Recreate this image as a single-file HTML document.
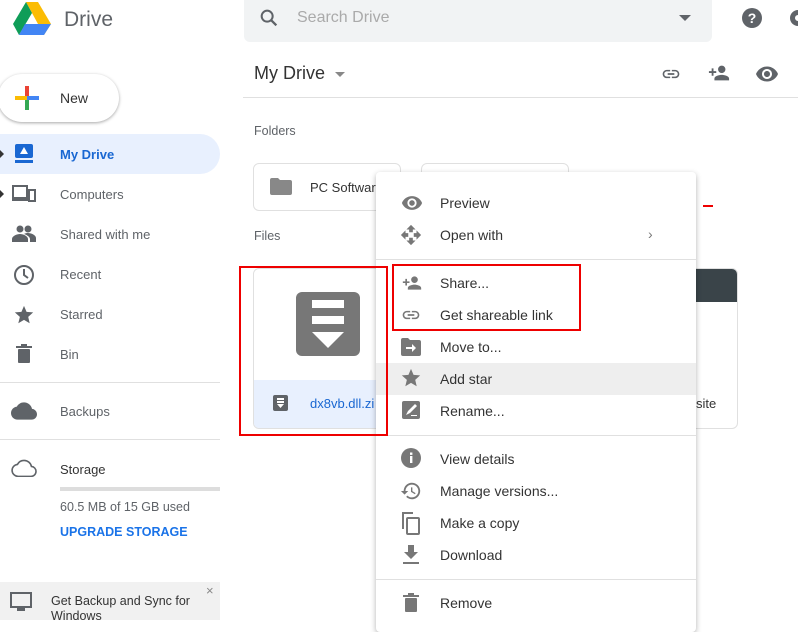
<!DOCTYPE html>
<html><head><meta charset="utf-8"><style>
*{box-sizing:border-box;margin:0;padding:0}
body{width:798px;height:620px;overflow:hidden;background:#fff;font-family:"Liberation Sans",Arial,sans-serif;position:relative;color:#333}
.a{position:absolute}
.nav{position:absolute;left:60px;font-size:13px;color:#5f6368}
.ic{position:absolute}
.mi{position:absolute;left:440px;font-size:14px;color:#333}
svg{position:absolute}
</style></head><body>
<!-- logo -->
<svg style="left:13px;top:2px" width="38" height="33" viewBox="0 0 38 33">
<polygon points="13,0 25,0 38,22 31,33" fill="#fbbc04"/>
<polygon points="13,0 0,22 6,33 19,11" fill="#0f9d58"/>
<polygon points="6,33 31,33 38,22 12,22" fill="#4285f4"/>
</svg>
<div class="a" style="left:64px;top:8px;font-size:21px;color:#5f6368">Drive</div>
<!-- search -->
<div class="a" style="left:244px;top:0;width:468px;height:42px;background:#f1f3f4;border-radius:0 0 6px 6px"></div>
<svg style="left:258px;top:7px" width="22" height="22" viewBox="0 0 24 24"><circle cx="10" cy="10" r="6" fill="none" stroke="#5f6368" stroke-width="2.2"/><path d="M14.5 14.5L20 20" stroke="#5f6368" stroke-width="2.5"/></svg>
<div class="a" style="left:297px;top:9px;font-size:16px;color:#aaa">Search Drive</div>
<svg style="left:679px;top:15px" width="12" height="6"><polygon points="0,0 12,0 6,6" fill="#5f6368"/></svg>
<svg style="left:741px;top:7px" width="22" height="22" viewBox="0 0 22 22"><circle cx="11" cy="11" r="10" fill="#5f6368"/><text x="11" y="16" font-size="14" font-weight="bold" fill="#fff" text-anchor="middle" font-family="Liberation Sans">?</text></svg>
<svg style="left:788px;top:8px" width="12" height="20"><circle cx="10" cy="10" r="8" fill="#5f6368"/><circle cx="10" cy="10" r="3" fill="#fff"/></svg>
<!-- header 2 -->
<div class="a" style="left:254px;top:63px;font-size:18px;color:#333">My Drive</div>
<svg style="left:335px;top:72px" width="10" height="5"><polygon points="0,0 10,0 5,5" fill="#888"/></svg>
<svg style="left:660px;top:64px" width="22" height="20" viewBox="0 0 24 24"><path d="M3.9 12c0-1.7 1.4-3.1 3.1-3.1h4V7H7c-2.8 0-5 2.2-5 5s2.2 5 5 5h4v-1.9H7c-1.7 0-3.1-1.4-3.1-3.1zM8 13h8v-2H8v2zm9-6h-4v1.9h4c1.7 0 3.1 1.4 3.1 3.1s-1.4 3.1-3.1 3.1h-4V17h4c2.8 0 5-2.2 5-5s-2.2-5-5-5z" fill="#5f6368"/></svg>
<svg style="left:706px;top:62px" width="26" height="22" viewBox="0 0 24 24"><path d="M15 12c2.2 0 4-1.8 4-4s-1.8-4-4-4-4 1.8-4 4 1.8 4 4 4zm-9-2V7H4v3H1v2h3v3h2v-3h3v-2H6zm9 4c-2.7 0-8 1.3-8 4v2h16v-2c0-2.7-5.3-4-8-4z" fill="#5f6368"/></svg>
<svg style="left:755px;top:62px" width="24" height="24" viewBox="0 0 24 24"><path d="M12 4.5C7 4.5 2.7 7.6 1 12c1.7 4.4 6 7.5 11 7.5s9.3-3.1 11-7.5c-1.7-4.4-6-7.5-11-7.5zM12 17c-2.8 0-5-2.2-5-5s2.2-5 5-5 5 2.2 5 5-2.2 5-5 5zm0-8c-1.7 0-3 1.3-3 3s1.3 3 3 3 3-1.3 3-3-1.3-3-3-3z" fill="#5f6368"/></svg>
<div class="a" style="left:243px;top:97px;width:555px;height:1px;background:#e0e0e0"></div>
<!-- New button -->
<div class="a" style="left:-2px;top:74px;width:121px;height:48px;border-radius:24px;background:#fff;box-shadow:0 1px 3px rgba(0,0,0,.35)"></div>
<div class="a" style="left:25px;top:86px;width:4px;height:24px;background:#ea4335"></div>
<div class="a" style="left:25px;top:98px;width:4px;height:12px;background:#34a853"></div>
<div class="a" style="left:15px;top:96px;width:12px;height:4px;background:#fbbc04"></div>
<div class="a" style="left:27px;top:96px;width:12px;height:4px;background:#4285f4"></div>
<div class="a" style="left:60px;top:90px;font-size:14px;color:#333">New</div>
<!-- nav -->
<div class="a" style="left:0;top:134px;width:220px;height:40px;background:#e8f0fe;border-radius:0 20px 20px 0"></div>
<svg style="left:0;top:150px" width="4" height="8"><polygon points="0,0 4,4 0,8" fill="#333"/></svg>
<svg style="left:0;top:190px" width="4" height="8"><polygon points="0,0 4,4 0,8" fill="#333"/></svg>
<svg style="left:14px;top:144px" width="20" height="20"><rect x="1" y="0" width="18" height="14" rx="2" fill="#1967d2"/><rect x="1" y="16" width="18" height="3" fill="#1967d2"/><polygon points="10,3 14,10 6,10" fill="#fff"/></svg>
<div class="nav" style="top:147px;color:#1967d2;font-weight:bold">My Drive</div>
<svg style="left:12px;top:185px" width="24" height="18"><rect x="1" y="1" width="14" height="12" fill="none" stroke="#5f6368" stroke-width="2"/><rect x="0" y="14" width="16" height="2" fill="#5f6368"/><rect x="17" y="5" width="6" height="11" fill="none" stroke="#5f6368" stroke-width="2"/></svg>
<div class="nav" style="top:187px">Computers</div>
<svg style="left:12px;top:225px" width="24" height="18" viewBox="0 0 24 18"><circle cx="8" cy="4" r="3.5" fill="#5f6368"/><circle cx="16" cy="4" r="3.5" fill="#5f6368"/><path d="M0 17v-3c0-3 5-5 8-5s8 2 8 5v3zM12 9c2-1 3-1 4-1 3 0 8 2 8 5v4h-6v-3c0-2-3-4-6-5z" fill="#5f6368"/></svg>
<div class="nav" style="top:227px">Shared with me</div>
<svg style="left:13px;top:264px" width="22" height="22"><circle cx="11" cy="11" r="9" fill="none" stroke="#5f6368" stroke-width="2"/><path d="M11 5v6l4 3" stroke="#5f6368" stroke-width="2" fill="none"/></svg>
<div class="nav" style="top:267px">Recent</div>
<svg style="left:13px;top:304px" width="22" height="22" viewBox="0 0 24 24"><path d="M12 17.3l6.2 3.7-1.6-7L22 9.2l-7.2-.6L12 2 9.2 8.6 2 9.2 7.5 14l-1.7 7z" fill="#5f6368"/></svg>
<div class="nav" style="top:307px">Starred</div>
<svg style="left:16px;top:344px" width="16" height="20"><rect x="0" y="2" width="16" height="2" fill="#5f6368"/><rect x="5" y="0" width="6" height="3" fill="#5f6368"/><rect x="2" y="5" width="12" height="14" rx="1" fill="#5f6368"/></svg>
<div class="nav" style="top:347px">Bin</div>
<div class="a" style="left:0;top:382px;width:220px;height:1px;background:#e0e0e0"></div>
<svg style="left:11px;top:402px" width="26" height="18" viewBox="0 0 24 16"><path d="M19.4 6C18.7 2.6 15.7 0 12 0 9.1 0 6.6 1.6 5.4 4 2.3 4.4 0 6.9 0 10c0 3.3 2.7 6 6 6h13c2.8 0 5-2.2 5-5 0-2.6-2-4.8-4.6-5z" fill="#5f6368"/></svg>
<div class="nav" style="top:404px">Backups</div>
<div class="a" style="left:0;top:439px;width:220px;height:1px;background:#e0e0e0"></div>
<svg style="left:11px;top:459px" width="26" height="18" viewBox="0 0 24 16"><path d="M19.4 6C18.7 2.6 15.7 0 12 0 9.1 0 6.6 1.6 5.4 4 2.3 4.4 0 6.9 0 10c0 3.3 2.7 6 6 6h13c2.8 0 5-2.2 5-5 0-2.6-2-4.8-4.6-5z" fill="none" stroke="#5f6368" stroke-width="1.6" transform="translate(1,1) scale(.92)"/></svg>
<div class="nav" style="top:462px;color:#333">Storage</div>
<div class="a" style="left:60px;top:487px;width:160px;height:4px;background:#ddd"></div>
<div class="nav" style="top:500px;font-size:12.5px">60.5 MB of 15 GB used</div>
<div class="nav" style="top:525px;font-size:12.5px;color:#1a73e8;font-weight:bold">UPGRADE STORAGE</div>
<div class="a" style="left:0;top:582px;width:220px;height:38px;background:#f1f1f1"></div>
<svg style="left:10px;top:592px" width="24" height="20"><rect x="1" y="1" width="20" height="14" fill="none" stroke="#5f6368" stroke-width="2"/><rect x="7" y="16" width="8" height="3" fill="#5f6368"/></svg>
<div class="a" style="left:51px;top:594px;font-size:12.5px;color:#333;line-height:15px">Get Backup and Sync for<br>Windows</div>
<div class="a" style="left:206px;top:583px;font-size:13px;color:#888">×</div>
<!-- content -->
<div class="a" style="left:254px;top:124px;font-size:12.5px;color:#5f6368">Folders</div>
<div class="a" style="left:253px;top:163px;width:148px;height:48px;border:1px solid #e0e0e0;border-radius:6px"></div>
<div class="a" style="left:421px;top:163px;width:148px;height:48px;border:1px solid #e0e0e0;border-radius:6px"></div>
<svg style="left:270px;top:178px" width="22" height="17"><path d="M0 2a2 2 0 012-2h6l2 2h10a2 2 0 012 2v11a2 2 0 01-2 2H2a2 2 0 01-2-2z" fill="#888"/></svg>
<div class="a" style="left:310px;top:180px;font-size:13px;color:#333">PC Softwar</div>
<div class="a" style="left:254px;top:229px;font-size:12.5px;color:#5f6368">Files</div>
<div class="a" style="left:253px;top:268px;width:140px;height:161px;border:1px solid #e0e0e0;border-radius:6px;overflow:hidden"><div style="position:absolute;left:0;top:111px;width:140px;height:50px;background:#e8f0fe"></div></div>
<svg style="left:296px;top:292px" width="64" height="64"><rect width="64" height="64" rx="6" fill="#777"/><rect x="16" y="8" width="32" height="8" fill="#fff"/><rect x="16" y="24" width="32" height="8" fill="#fff"/><polygon points="16,40 48,40 32,56" fill="#fff"/></svg>
<svg style="left:272px;top:394px" width="18" height="18"><rect x="1" y="1" width="15" height="16" rx="2" fill="#5f6368"/><rect x="5" y="4" width="7" height="2" fill="#fff"/><rect x="5" y="7" width="7" height="2" fill="#fff"/><polygon points="5,10 12,10 8.5,14" fill="#fff"/></svg>
<div class="a" style="left:310px;top:396px;font-size:13px;color:#1967d2">dx8vb.dll.zi</div>
<div class="a" style="left:680px;top:268px;width:58px;height:161px;border:1px solid #e0e0e0;border-radius:6px;overflow:hidden"><div style="position:absolute;left:0;top:0;width:58px;height:33px;background:#3a4449"></div></div>
<div class="a" style="left:696px;top:396px;font-size:13px;color:#333">site</div>
<div class="a" style="left:703px;top:205px;width:10px;height:2px;background:#e00"></div>
<!-- menu -->
<div class="a" style="left:376px;top:172px;width:320px;height:460px;background:#fff;box-shadow:0 2px 6px rgba(0,0,0,.3);border-radius:4px"></div>
<div class="a" style="left:376px;top:363px;width:320px;height:32px;background:#eee"></div>
<div class="a" style="left:376px;top:259px;width:320px;height:1px;background:#e0e0e0"></div>
<div class="a" style="left:376px;top:435px;width:320px;height:1px;background:#e0e0e0"></div>
<div class="a" style="left:376px;top:579px;width:320px;height:1px;background:#e0e0e0"></div>
<svg style="left:400px;top:192px" width="24" height="22" viewBox="0 0 24 24"><path d="M12 4.5C7 4.5 2.7 7.6 1 12c1.7 4.4 6 7.5 11 7.5s9.3-3.1 11-7.5c-1.7-4.4-6-7.5-11-7.5zM12 17c-2.8 0-5-2.2-5-5s2.2-5 5-5 5 2.2 5 5-2.2 5-5 5zm0-8c-1.7 0-3 1.3-3 3s1.3 3 3 3 3-1.3 3-3-1.3-3-3-3z" fill="#777"/></svg>
<div class="mi" style="top:195px">Preview</div>
<svg style="left:400px;top:224px" width="22" height="22" viewBox="0 0 24 24"><path d="M10 9h4V6h3l-5-5-5 5h3v3zm-1 1H6V7l-5 5 5 5v-3h3v-4zm14 2l-5-5v3h-3v4h3v3l5-5zm-9 3h-4v3H7l5 5 5-5h-3v-3z" fill="#777"/></svg>
<div class="mi" style="top:227px">Open with</div>
<div class="a" style="left:648px;top:226px;font-size:14px;color:#777">›</div>
<svg style="left:400px;top:273px" width="24" height="20" viewBox="0 0 24 24"><path d="M15 12c2.2 0 4-1.8 4-4s-1.8-4-4-4-4 1.8-4 4 1.8 4 4 4zm-9-2V7H4v3H1v2h3v3h2v-3h3v-2H6zm9 4c-2.7 0-8 1.3-8 4v2h16v-2c0-2.7-5.3-4-8-4z" fill="#777"/></svg>
<div class="mi" style="top:275px">Share...</div>
<svg style="left:400px;top:305px" width="22" height="20" viewBox="0 0 24 24"><path d="M3.9 12c0-1.7 1.4-3.1 3.1-3.1h4V7H7c-2.8 0-5 2.2-5 5s2.2 5 5 5h4v-1.9H7c-1.7 0-3.1-1.4-3.1-3.1zM8 13h8v-2H8v2zm9-6h-4v1.9h4c1.7 0 3.1 1.4 3.1 3.1s-1.4 3.1-3.1 3.1h-4V17h4c2.8 0 5-2.2 5-5s-2.2-5-5-5z" fill="#777"/></svg>
<div class="mi" style="top:307px">Get shareable link</div>
<svg style="left:401px;top:338px" width="20" height="18"><path d="M0 2a2 2 0 012-2h5l2 2h9a2 2 0 012 2v12a2 2 0 01-2 2H2a2 2 0 01-2-2z" fill="#777"/><path d="M5 9h6V6l4 4-4 4v-3H5z" fill="#fff"/></svg>
<div class="mi" style="top:339px">Move to...</div>
<svg style="left:400px;top:367px" width="22" height="22" viewBox="0 0 24 24"><path d="M12 17.3l6.2 3.7-1.6-7L22 9.2l-7.2-.6L12 2 9.2 8.6 2 9.2 7.5 14l-1.7 7z" fill="#777"/></svg>
<div class="mi" style="top:371px">Add star</div>
<svg style="left:402px;top:401px" width="18" height="18"><rect width="18" height="18" rx="2" fill="#777"/><path d="M4 14l2-4 7-7 2 2-7 7z M9 14h6v1H9z" fill="#fff"/></svg>
<div class="mi" style="top:403px">Rename...</div>
<svg style="left:401px;top:448px" width="20" height="20"><circle cx="10" cy="10" r="10" fill="#777"/><rect x="9" y="8" width="2.4" height="7" fill="#fff"/><rect x="9" y="4.5" width="2.4" height="2.4" fill="#fff"/></svg>
<div class="mi" style="top:451px">View details</div>
<svg style="left:400px;top:480px" width="22" height="22" viewBox="0 0 24 24"><path d="M13 3a9 9 0 00-9 9H1l4 4 4-4H6a7 7 0 117 7 7 7 0 01-4.9-2l-1.4 1.4A9 9 0 1013 3zm-1 5v5l4.3 2.5.7-1.2-3.5-2.1V8z" fill="#777"/></svg>
<div class="mi" style="top:483px">Manage versions...</div>
<svg style="left:401px;top:511px" width="20" height="24"><path d="M1 1h11v2H3v15H1z" fill="#777"/><rect x="6" y="7" width="12" height="16" rx="1" fill="none" stroke="#777" stroke-width="2"/></svg>
<div class="mi" style="top:515px">Make a copy</div>
<svg style="left:402px;top:545px" width="18" height="20"><path d="M6 0h6v7h4l-7 7-7-7h4z" fill="#777"/><rect x="1" y="17" width="16" height="2" fill="#777"/></svg>
<div class="mi" style="top:547px">Download</div>
<svg style="left:403px;top:593px" width="16" height="20"><rect x="0" y="2" width="16" height="2" fill="#777"/><rect x="5" y="0" width="6" height="3" fill="#777"/><rect x="2" y="5" width="12" height="14" rx="1" fill="#777"/></svg>
<div class="mi" style="top:595px">Remove</div>
<!-- red boxes -->
<div class="a" style="left:239px;top:266px;width:149px;height:170px;border:2px solid #e00"></div>
<div class="a" style="left:392px;top:264px;width:189px;height:67px;border:2px solid #e00"></div>
</body></html>
